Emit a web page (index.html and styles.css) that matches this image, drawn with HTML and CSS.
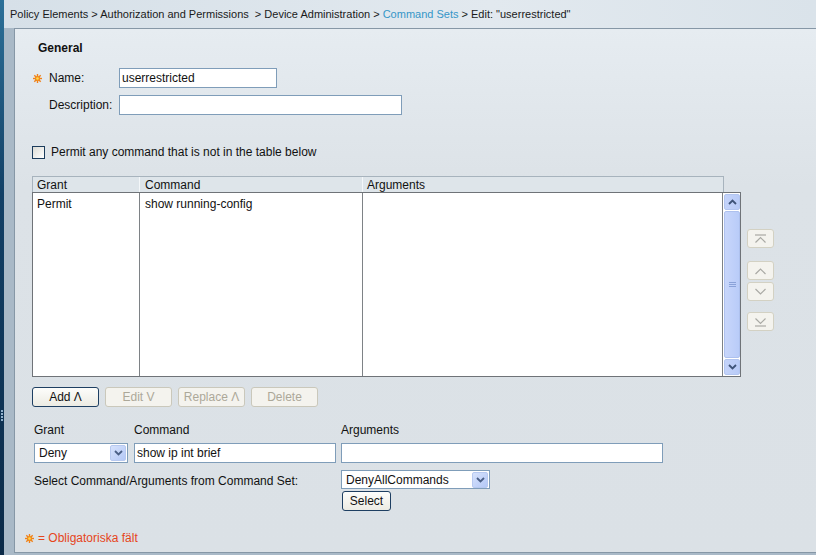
FILE: index.html
```html
<!DOCTYPE html>
<html lang="sv">

<head>
  <meta charset="UTF-8">
  <meta name="viewport" content="width=device-width, initial-scale=1.0">
  <title>Edit: "userrestricted"</title>
  <link rel="stylesheet" href="styles.css">
</head>

<body>
  <div class="frame">
    <div class="edge">
      <div class="grip"><span></span><span></span><span></span><span></span></div>
    </div>

    <div class="main">
      <div class="crumbs">
        Policy Elements &gt; Authorization and Permissions &nbsp;&gt; Device Administration &gt;
        <a class="crumb-link">Command Sets</a> &gt; Edit: "userrestricted"
      </div>

      <div class="workspace">
        <div class="panel">

          <div class="section-title">General</div>

          <div class="field-row">
            <span class="req"><svg width="9" height="9" viewBox="0 0 9 9">
                <g stroke="#f0801a" stroke-width="1.4">
                  <line x1="4.5" y1="0" x2="4.5" y2="9" />
                  <line x1="0" y1="4.5" x2="9" y2="4.5" />
                  <line x1="1.3" y1="1.3" x2="7.7" y2="7.7" />
                  <line x1="7.7" y1="1.3" x2="1.3" y2="7.7" />
                </g>
                <circle cx="4.5" cy="4.5" r="2.6" fill="#f08a1c" />
                <circle cx="4.5" cy="4.5" r="1.3" fill="#ffd84a" />
              </svg></span>
            <label class="field-label">Name:</label>
            <div class="textbox name-box">userrestricted</div>
          </div>

          <div class="field-row desc-row">
            <span class="req"></span>
            <label class="field-label">Description:</label>
            <div class="textbox desc-box"></div>
          </div>

          <div class="check-row">
            <span class="checkbox"></span>
            <span>Permit any command that is not in the table below</span>
          </div>

          <div class="grid-area">
            <div class="grid">
              <div class="grid-head">
                <div class="col col-grant">Grant</div>
                <div class="col col-cmd">Command</div>
                <div class="col col-args">Arguments</div>
              </div>
              <div class="grid-body">
                <div class="col col-grant">Permit</div>
                <div class="col col-cmd">show running-config</div>
                <div class="col col-args"></div>
                <div class="scrollbar">
                  <div class="sb-btn">
                    <svg width="9" height="6" viewBox="0 0 9 6"><path d="M1 5 L4.5 1.5 L8 5" fill="none" stroke="#3e5378" stroke-width="1.8" /></svg>
                  </div>
                  <div class="sb-thumb">
                    <svg width="7" height="6" viewBox="0 0 7 6"><g stroke="#8aa2d8" stroke-width="1"><line x1="0" y1="0.5" x2="7" y2="0.5" /><line x1="0" y1="2.5" x2="7" y2="2.5" /><line x1="0" y1="4.5" x2="7" y2="4.5" /></g></svg>
                  </div>
                  <div class="sb-btn">
                    <svg width="9" height="6" viewBox="0 0 9 6"><path d="M1 1 L4.5 4.5 L8 1" fill="none" stroke="#3e5378" stroke-width="1.8" /></svg>
                  </div>
                </div>
              </div>
            </div>

            <div class="move-btns">
              <div class="move-btn first">
                <svg width="13" height="10" viewBox="0 0 13 10"><g fill="none" stroke="#a9a9a4" stroke-width="1.2"><line x1="1" y1="1" x2="12" y2="1" /><path d="M1.5 8.5 L6.5 3.5 L11.5 8.5" /></g></svg>
              </div>
              <div class="move-btn up">
                <svg width="13" height="8" viewBox="0 0 13 8"><path d="M1.5 7 L6.5 2 L11.5 7" fill="none" stroke="#a9a9a4" stroke-width="1.2" /></svg>
              </div>
              <div class="move-btn down">
                <svg width="13" height="8" viewBox="0 0 13 8"><path d="M1.5 1 L6.5 6 L11.5 1" fill="none" stroke="#a9a9a4" stroke-width="1.2" /></svg>
              </div>
              <div class="move-btn last">
                <svg width="13" height="10" viewBox="0 0 13 10"><g fill="none" stroke="#a9a9a4" stroke-width="1.2"><path d="M1.5 1.5 L6.5 6.5 L11.5 1.5" /><line x1="1" y1="9" x2="12" y2="9" /></g></svg>
              </div>
            </div>
          </div>

          <div class="action-row">
            <button class="btn">Add &Lambda;</button>
            <button class="btn" disabled>Edit V</button>
            <button class="btn" disabled>Replace &Lambda;</button>
            <button class="btn" disabled>Delete</button>
          </div>

          <div class="entry">
            <div class="entry-label">Grant</div>
            <div class="entry-label">Command</div>
            <div class="entry-label">Arguments</div>

            <div class="dropdown grant-select">
              <span>Deny</span>
              <span class="dd-arrow"><svg width="9" height="6" viewBox="0 0 9 6"><path d="M1 1 L4.5 4.5 L8 1" fill="none" stroke="#4a5f86" stroke-width="1.8" /></svg></span>
            </div>
            <div class="textbox cmd-box">show ip int brief</div>
            <div class="textbox args-box"></div>
          </div>

          <div class="set-row">
            <div class="set-label">Select Command/Arguments from Command Set:</div>
            <div class="set-pick">
              <div class="dropdown set-select">
                <span>DenyAllCommands</span>
                <span class="dd-arrow"><svg width="9" height="6" viewBox="0 0 9 6"><path d="M1 1 L4.5 4.5 L8 1" fill="none" stroke="#4a5f86" stroke-width="1.8" /></svg></span>
              </div>
              <button class="btn small">Select</button>
            </div>
          </div>

          <div class="legend">
            <svg width="9" height="9" viewBox="0 0 9 9">
              <g stroke="#f0801a" stroke-width="1.4">
                <line x1="4.5" y1="0" x2="4.5" y2="9" />
                <line x1="0" y1="4.5" x2="9" y2="4.5" />
                <line x1="1.3" y1="1.3" x2="7.7" y2="7.7" />
                <line x1="7.7" y1="1.3" x2="1.3" y2="7.7" />
              </g>
              <circle cx="4.5" cy="4.5" r="2.6" fill="#f08a1c" />
              <circle cx="4.5" cy="4.5" r="1.3" fill="#ffd84a" />
            </svg>
            <span>= Obligatoriska fält</span>
          </div>

        </div>
      </div>
    </div>
  </div>
</body>

</html>
```

FILE: styles.css
```css
* {
  margin: 0;
  padding: 0;
  box-sizing: border-box;
}

html,
body {
  height: 100%;
}

body {
  font-family: "Liberation Sans", Arial, sans-serif;
  font-size: 12px;
  color: #111;
  overflow: hidden;
}

.frame {
  display: flex;
  height: 555px;
}

.edge {
  width: 4px;
  background: linear-gradient(#2c7098, #124066 35%, #0b2a48);
  position: relative;
}

.grip {
  position: absolute;
  top: 410px;
  left: 1px;
  display: flex;
  flex-direction: column;
  gap: 1px;
}

.grip span {
  width: 2px;
  height: 2px;
  background: #8fb0cc;
}

.main {
  flex: 1;
  display: flex;
  flex-direction: column;
}

.crumbs {
  height: 28px;
  line-height: 28px;
  padding-left: 6px;
  font-size: 11px;
  white-space: nowrap;
  color: #1a1a1a;
  background: linear-gradient(90deg, #d6e0e8, #e2e9ef 60%, #dae3ea);
}

.crumb-link {
  color: #3596c8;
}

.workspace {
  flex: 1;
  background: #a9b9c7;
  padding: 0 0 2px 10px;
  display: flex;
}

.panel {
  flex: 1;
  border: 1px solid #8697a6;
  border-right: none;
  background: linear-gradient(#e6ecf1, #dce2e7 30%, #dbe1e6);
  padding: 12px 0 0 17px;
}

.section-title {
  font-weight: bold;
  line-height: 14px;
  margin-left: 6px;
}

.field-row {
  display: flex;
  align-items: center;
  margin-top: 13px;
}

.desc-row {
  margin-top: 7px;
}

.req {
  width: 17px;
  padding-left: 1px;
  display: flex;
  align-items: center;
}

.field-label {
  width: 70px;
}

.textbox {
  height: 20px;
  border: 1px solid #7f9db9;
  background: #fff;
  line-height: 18px;
  padding-left: 2px;
  white-space: nowrap;
}

.name-box {
  width: 158px;
}

.desc-box {
  width: 283px;
}

.check-row {
  display: flex;
  align-items: center;
  gap: 6px;
  margin-top: 30px;
  height: 14px;
}

.checkbox {
  width: 13px;
  height: 13px;
  border: 1px solid #1c3c5c;
  background: linear-gradient(135deg, #dcdcd6, #fff);
}

.grid-area {
  display: flex;
  margin-top: 17px;
}

.grid {
  width: 709px;
}

.grid-head {
  display: flex;
  width: 692px;
  height: 16px;
  border: 1px solid #a7b3bd;
  border-bottom: none;
  background: #dee5ea;
  line-height: 16px;
}

.grid-head .col {
  padding-left: 4px;
  border-right: 1px solid #f4f7f9;
}

.grid-head .col-cmd {
  padding-left: 5px;
}

.grid-head .col-args {
  border-right: none;
}

.col-grant {
  width: 107px;
}

.col-cmd {
  width: 223px;
}

.col-args {
  flex: 1;
}

.grid-body {
  display: flex;
  height: 185px;
  border: 1px solid #6f7378;
  background: #fff;
}

.grid-body .col {
  padding: 4px 0 0 4px;
  border-right: 1px solid #7e8286;
}

.grid-body .col-cmd {
  padding-left: 5px;
}

.scrollbar {
  width: 17px;
  display: flex;
  flex-direction: column;
  gap: 1px;
  padding: 1px 0 1px 1px;
}

.sb-btn {
  height: 16px;
  background: linear-gradient(90deg, #c4d3fa, #b8cbf7);
  border: 1px solid #b2c5f0;
  border-radius: 2px;
  display: flex;
  align-items: center;
  justify-content: center;
}

.sb-thumb {
  flex: 1;
  background: linear-gradient(90deg, #c8d6fb, #b9ccf8);
  border: 1px solid #aec1ee;
  border-radius: 2px;
  display: flex;
  align-items: center;
  justify-content: center;
}

.move-btns {
  display: flex;
  flex-direction: column;
  padding: 53px 0 0 6px;
}

.move-btn {
  width: 27px;
  height: 19px;
  background: #f4f3ee;
  border: 1px solid #d3d1c3;
  border-radius: 3px;
  display: flex;
  align-items: center;
  justify-content: center;
}

.move-btn.up {
  margin-top: 13px;
}

.move-btn.down {
  margin-top: 2px;
}

.move-btn.last {
  margin-top: 11px;
}

.action-row {
  display: flex;
  gap: 6px;
  margin-top: 10px;
}

.btn {
  width: 67px;
  height: 20px;
  font-family: inherit;
  font-size: 12px;
  color: #111;
  border: 1px solid #1e3f62;
  border-radius: 3px;
  background: linear-gradient(#fdfdfb, #ecebe3);
}

.btn:disabled {
  color: #aca899;
  border-color: #cac8bb;
  background: #f4f3ee;
}

.btn.small {
  width: 49px;
  height: 20px;
  margin: 2px 0 0 1px;
}

.entry {
  display: grid;
  grid-template-columns: 100px 207px 322px;
  row-gap: 6px;
  margin: 16px 0 0 2px;
}

.entry-label {
  line-height: 14px;
}

.dropdown {
  height: 20px;
  border: 1px solid #7f9db9;
  background: #fff;
  display: flex;
  align-items: center;
  justify-content: space-between;
  padding: 0 1px 0 4px;
}

.dd-arrow {
  width: 16px;
  height: 16px;
  border-radius: 2px;
  background: linear-gradient(135deg, #d6e2fc, #b4c8f6);
  border: 1px solid #b7c9f0;
  display: flex;
  align-items: center;
  justify-content: center;
}

.grant-select {
  width: 94px;
}

.cmd-box {
  width: 202px;
}

.args-box {
  width: 322px;
}

.set-row {
  display: flex;
  margin: 7px 0 0 2px;
}

.set-label {
  width: 307px;
  padding-top: 4px;
}

.set-select {
  width: 149px;
  height: 19px;
}

.legend {
  display: flex;
  align-items: center;
  gap: 4px;
  margin: 20px 0 0 -7px;
  color: #e6451c;
}
```
